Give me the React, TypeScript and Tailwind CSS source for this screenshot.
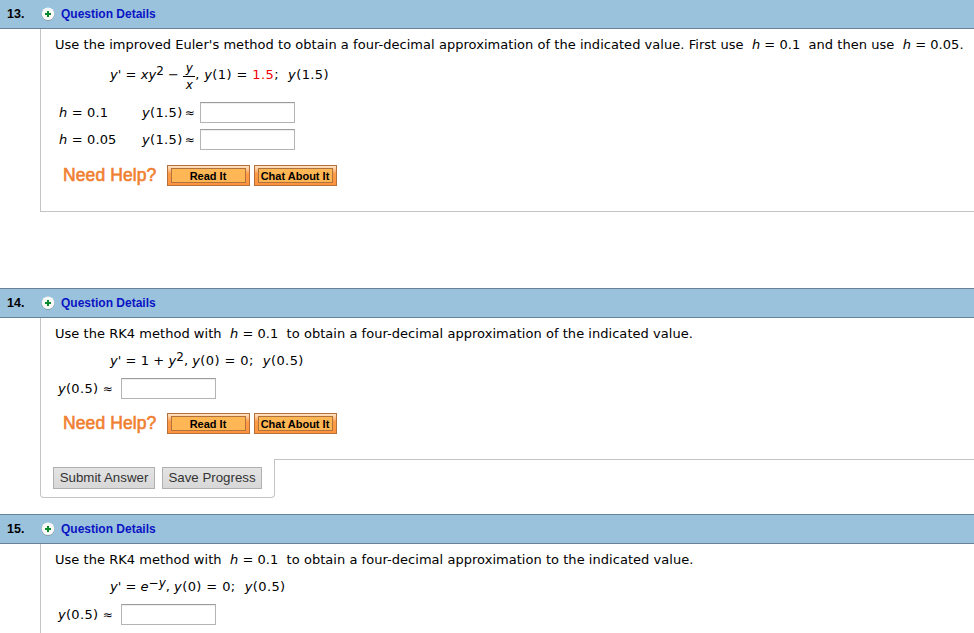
import type { ReactNode } from "react";

function Header({ num }: { num: string }) {
  return (
    <div className="h-[30px] shrink-0 flex items-center bg-[#9bc2dc] border-y border-[#678298] font-['Liberation_Sans',sans-serif] text-[12px] font-bold">
      <span className="w-[34px] ml-[7px] text-black text-[12.5px]">{num}</span>
      <svg width="14" height="14" viewBox="0 0 14 14">
        <circle cx="7" cy="7.5" r="6.4" fill="#8499a6" />
        <circle cx="7" cy="6.8" r="6.3" fill="#f8f8f6" />
        <path d="M7 4v6M4 7h6" stroke="#0a8a2c" strokeWidth="2" />
      </svg>
      <a className="ml-[6px] text-[#0a14c4]">Question Details</a>
    </div>
  );
}

function Input() {
  return (
    <input
      type="text"
      className="block w-[95px] h-[21px] bg-white border border-[#b4b4b4] border-t-[#9c9c9c] shadow-[inset_0_1px_1px_#eeeeee] outline-none"
    />
  );
}

function HelpButton({ children }: { children: ReactNode }) {
  return (
    <button className="w-[83px] h-[21px] p-[2px_3px] border border-[#b5703a] bg-linear-to-b from-[#ffe6c8] via-[#ff9c48] via-40% to-[#ff9440]">
      <span className="flex items-center justify-center h-[15px] pt-[2px] pr-px border border-[#b0713a] bg-[#ffb655] font-['Liberation_Sans',sans-serif] text-[11px] leading-none font-bold text-black whitespace-nowrap">
        {children}
      </span>
    </button>
  );
}

function NeedHelp() {
  return (
    <div className="flex items-center h-[21px] ml-[22px]">
      <span className="w-[104px] font-['Liberation_Sans',sans-serif] text-[17.5px] leading-[21px] tracking-[0.1px] text-[#f08030] [-webkit-text-stroke:0.6px_#f08030]">
        Need Help?
      </span>
      <div className="flex gap-1">
        <HelpButton>Read It</HelpButton>
        <HelpButton>Chat About It</HelpButton>
      </div>
    </div>
  );
}

function Sup({ children }: { children: ReactNode }) {
  return <span className="relative -top-[4px] text-[12px]">{children}</span>;
}

function Approx() {
  return <span className="text-[12px] tracking-normal">≈</span>;
}

export default function App() {
  return (
    <div className="w-[974px] h-[633px] overflow-hidden bg-white text-black font-['DejaVu_Sans',sans-serif] text-[13px] leading-[18px] whitespace-pre">
      <section className="-mt-px h-[289px]">
        <Header num="13." />
        <div className="ml-[40px] h-[183px] border-l border-b border-[#c4c4c4]">
          <p className="pt-[7px] ml-[14px] tracking-[0.04px]">
            Use the improved Euler's method to obtain a four-decimal approximation of the indicated value. First use  <i>h</i> = 0.1  and then use  <i>h</i> = 0.05.
          </p>
          <div className="flex items-center h-[34px] mt-[4px] ml-[69px]">
            <span className="tracking-[0.05px]"><i>y</i>' = <i>xy</i><Sup>2</Sup> − </span>
            <span className="flex flex-col items-center mt-[4px] w-[12px] italic text-[12px]">
              <span className="w-full text-center border-b border-black h-[15px] leading-[12px]">y</span>
              <span className="h-[15px] leading-[16px]">x</span>
            </span>
            <span className="tracking-[0.4px]">, <i>y</i>(1) = <span className="text-[#f00000]">1.5</span>;  <i>y</i>(1.5)</span>
          </div>
          <div className="grid grid-cols-[83px_58px_95px] gap-y-[6px] items-center mt-[10px] ml-[18px]">
            <span className="tracking-[0.15px]"><i>h</i> = 0.1</span>
            <span className="flex gap-[2px] pt-px tracking-[0.35px]"><span><i>y</i>(1.5)</span><Approx /></span>
            <Input />
            <span className="tracking-[0.15px]"><i>h</i> = 0.05</span>
            <span className="flex gap-[2px] pt-px tracking-[0.35px]"><span><i>y</i>(1.5)</span><Approx /></span>
            <Input />
          </div>
          <div className="mt-[15px]"><NeedHelp /></div>
        </div>
      </section>

      <section className="h-[226px]">
        <Header num="14." />
        <div className="ml-[40px] h-[141px] border-l border-[#c4c4c4]">
          <p className="pt-[7px] ml-[14px] tracking-[0.036px]">
            Use the RK4 method with  <i>h</i> = 0.1  to obtain a four-decimal approximation of the indicated value.
          </p>
          <p className="mt-[9px] ml-[69px] tracking-[0.4px]">
            <span className="tracking-[0.06px]"><i>y</i>' = 1 + <i>y</i><Sup>2</Sup>, </span><i>y</i>(0) = 0;  <i>y</i>(0.5)
          </p>
          <div className="flex items-center mt-[8px] ml-[17px]">
            <span className="w-[63px] pt-px tracking-[0.3px]"><i>y</i>(0.5) <Approx /></span>
            <Input />
          </div>
          <div className="mt-[14px]"><NeedHelp /></div>
        </div>
        <div className="ml-[40px] flex">
          <div className="w-[235px] h-[39px] border border-t-0 border-[#c4c4c4] rounded-b-[4px] flex gap-[7px] pl-[12px] pt-[8px] font-['Liberation_Sans',sans-serif] text-[13.3px] text-[#333333]">
            <button className="w-[102px] h-[22px] border border-[#b0b0b0] bg-linear-to-b from-[#e3e3e3] to-[#d8d8d8]">Submit Answer</button>
            <button className="w-[100px] h-[22px] border border-[#b0b0b0] bg-linear-to-b from-[#e3e3e3] to-[#d8d8d8]">Save Progress</button>
          </div>
          <div className="flex-1 h-px bg-[#c4c4c4]" />
        </div>
      </section>

      <section>
        <Header num="15." />
        <div className="ml-[40px] h-[100px] border-l border-[#c4c4c4]">
          <p className="pt-[7px] ml-[14px] tracking-[0.036px]">
            Use the RK4 method with  <i>h</i> = 0.1  to obtain a four-decimal approximation to the indicated value.
          </p>
          <p className="mt-[9px] ml-[69px] tracking-[0.4px]">
            <span className="tracking-[0.02px]"><i>y</i>' = <i>e</i><Sup>−<i>y</i></Sup>, </span><i>y</i>(0) = 0;  <i>y</i>(0.5)
          </p>
          <div className="flex items-center mt-[8px] ml-[17px]">
            <span className="w-[63px] pt-px tracking-[0.3px]"><i>y</i>(0.5) <Approx /></span>
            <Input />
          </div>
        </div>
      </section>
    </div>
  );
}
